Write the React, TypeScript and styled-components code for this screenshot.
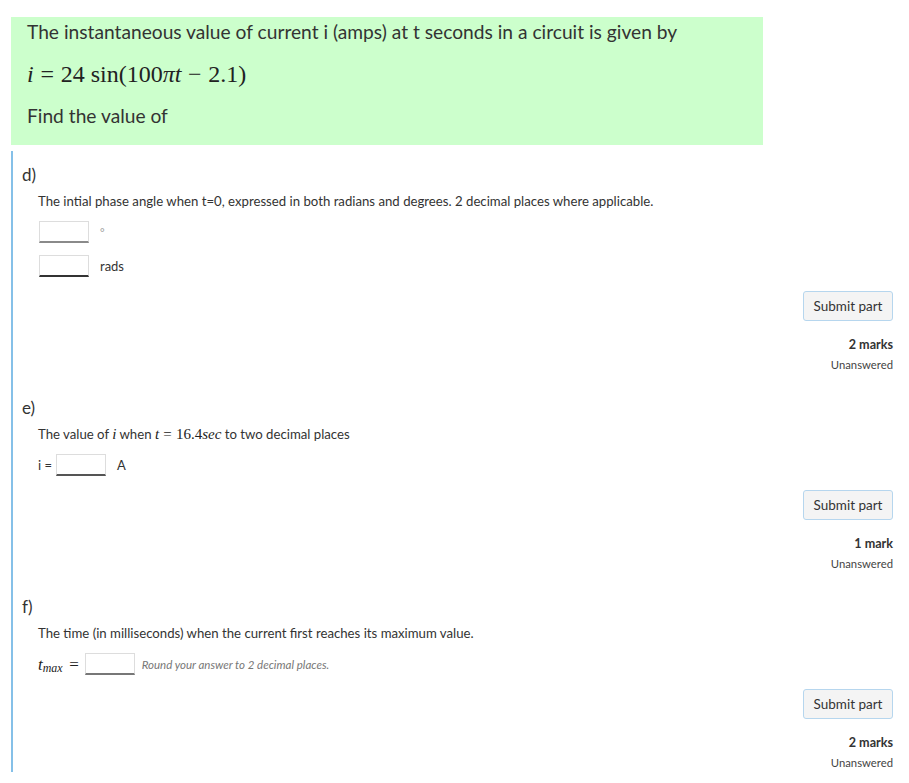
import React from "react";
import styled, { createGlobalStyle } from "styled-components";

const GlobalStyle = createGlobalStyle`
  html, body { margin: 0; padding: 0; background: #ffffff; }
  body {
    font-family: Lato, "Open Sans", sans-serif;
    color: #333333;
  }
`;

const Page = styled.div`
  padding-top: 17px;
  width: 909px;
  box-sizing: border-box;
`;

const Statement = styled.div`
  margin-left: 11px;
  width: 752px;
  box-sizing: border-box;
  background: #ccffcc;
  padding: 3px 16px 17px;
  font-size: 19.2px;
`;

const Para = styled.p`
  margin: 0 0 18px;
  height: 24px;
  line-height: 24px;
  &:last-child { margin-bottom: 0; }
`;

const MathText = styled.span<{ $size?: number }>`
  font-family: "Liberation Serif", "DejaVu Serif", serif;
  font-size: ${(p) => p.$size ?? 22}px;
  line-height: 1;
  color: #222;
  white-space: nowrap;
`;

const MI = styled.i`
  font-style: italic;
`;

const Op = styled.span`
  margin: 0 0.28em;
`;

const Parts = styled.div`
  margin: 6px 16px 0 11px;
  border-left: 2px solid #85c0e8;
  padding: 12px 0 0 9px;
  display: flex;
  flex-direction: column;
  gap: 22px;
`;

const Part = styled.section`
  display: flex;
  flex-direction: column;
`;

const Header = styled.div`
  font-size: 17px;
  line-height: 24px;
`;

const Body = styled.div`
  padding-left: 16px;
`;

const Prompt = styled.div`
  margin-top: 4px;
  font-size: 13.2px;
  line-height: 20px;
`;

const Answers = styled.div`
  margin-top: 10px;
  display: flex;
  flex-direction: column;
  gap: 12px;
`;

const Row = styled.div`
  display: flex;
  align-items: center;
  height: 22px;
  font-size: 13px;
`;

const Input = styled.input<{ $line: string }>`
  width: 50px;
  height: 22px;
  box-sizing: border-box;
  border: 1px solid #dddddd;
  border-bottom: 2px solid ${(p) => p.$line};
  background: #ffffff;
  padding: 0 4px;
  margin: 0 0 0 1px;
  outline: none;
`;

const Unit = styled.span<{ $muted?: boolean }>`
  margin-left: 11px;
  color: ${(p) => (p.$muted ? "#999" : "#333")};
  font-size: ${(p) => (p.$muted ? 11 : 13)}px;
`;

const Prefix = styled.span`
  margin-right: 3px;
  font-size: 13px;
`;

const Hint = styled.span`
  margin-left: 7px;
  font-size: 11.5px;
  font-style: italic;
  color: #777777;
`;

const Footer = styled.div`
  margin-top: 14px;
  display: flex;
  flex-direction: column;
  align-items: flex-end;
`;

const SubmitButton = styled.button`
  height: 30px;
  width: 90px;
  box-sizing: border-box;
  padding: 0;
  border: 1px solid #b6d6ee;
  border-radius: 3px;
  background: #f4f4f4;
  font-family: Lato, "Open Sans", sans-serif;
  font-size: 13.5px;
  color: #333;
`;

const Marks = styled.div`
  margin-top: 15px;
  font-size: 12.6px;
  font-weight: 700;
  line-height: 18px;
`;

const Status = styled.div`
  margin-top: 2px;
  font-size: 11.3px;
  line-height: 18px;
  color: #444;
`;

const MathSub = styled.span`
  display: inline-flex;
  align-items: baseline;
  margin-right: 2px;
`;

const Sub = styled.span`
  font-size: 0.7em;
  position: relative;
  top: 0.25em;
`;

function PartFooter({ marks }: { marks: string }) {
  return (
    <Footer>
      <SubmitButton>Submit part</SubmitButton>
      <Marks>{marks}</Marks>
      <Status>Unanswered</Status>
    </Footer>
  );
}

export default function App() {
  return (
    <Page>
      <GlobalStyle />
      <Statement>
        <Para>The instantaneous value of current i (amps) at t seconds in a circuit is given by</Para>
        <Para>
          <MathText $size={24}>
            <MI>i</MI>
            <Op>=</Op>24 sin(100<MI>πt</MI>
            <Op>−</Op>2.1)
          </MathText>
        </Para>
        <Para>Find the value of</Para>
      </Statement>

      <Parts>
        <Part>
          <Header>d)</Header>
          <Body>
            <Prompt>
              The intial phase angle when t=0, expressed in both radians and degrees. 2 decimal places where applicable.
            </Prompt>
            <Answers>
              <Row>
                <Input $line="#8a8a8a" />
                <Unit $muted>°</Unit>
              </Row>
              <Row>
                <Input $line="#333333" />
                <Unit>rads</Unit>
              </Row>
            </Answers>
          </Body>
          <PartFooter marks="2 marks" />
        </Part>

        <Part>
          <Header>e)</Header>
          <Body>
            <Prompt>
              The value of{" "}
              <MathText $size={15}>
                <MI>i</MI>
              </MathText>{" "}
              when{" "}
              <MathText $size={15}>
                <MI>t</MI>
                <Op>=</Op>16.4<MI>sec</MI>
              </MathText>{" "}
              to two decimal places
            </Prompt>
            <Answers>
              <Row>
                <Prefix>i =</Prefix>
                <Input $line="#555555" />
                <Unit>A</Unit>
              </Row>
            </Answers>
          </Body>
          <PartFooter marks="1 mark" />
        </Part>

        <Part>
          <Header>f)</Header>
          <Body>
            <Prompt>The time (in milliseconds) when the current first reaches its maximum value.</Prompt>
            <Answers>
              <Row>
                <MathText $size={17}>
                  <MathSub>
                    <MI>t</MI>
                    <Sub>
                      <MI>max</MI>
                    </Sub>
                  </MathSub>
                  <Op>=</Op>
                </MathText>
                <Input $line="#777777" />
                <Hint>Round your answer to 2 decimal places.</Hint>
              </Row>
            </Answers>
          </Body>
          <PartFooter marks="2 marks" />
        </Part>
      </Parts>
    </Page>
  );
}
